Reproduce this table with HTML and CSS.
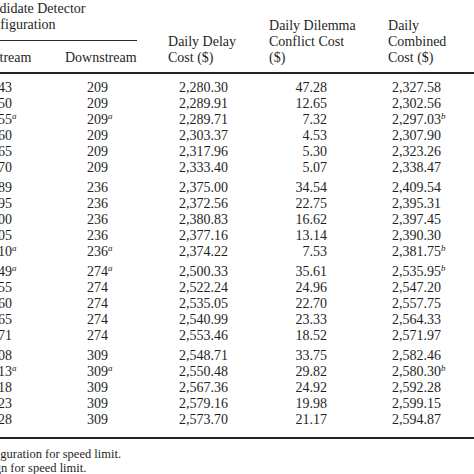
FILE: index.html
```html
<!DOCTYPE html>
<html>
<head>
<meta charset="utf-8">
<title>Detector configuration costs</title>
<link rel="stylesheet" href="styles.css">
</head>
<body>
<div class="page">
<table class="results">
<colgroup>
<col class="c-up"><col class="c-down"><col class="c-delay"><col class="c-dil"><col class="c-comb">
</colgroup>
<thead>
<tr>
<th colspan="2" class="group-head">Candidate Detector<br>Configuration</th>
<th rowspan="2" class="h-delay">Daily Delay<br>Cost ($)</th>
<th rowspan="2" class="h-dil">Daily Dilemma<br>Conflict Cost<br>($)</th>
<th rowspan="2" class="h-comb">Daily<br>Combined<br>Cost ($)</th>
</tr>
<tr>
<th class="h-up">Upstream</th>
<th class="h-down">Downstream</th>
</tr>
</thead>
<tbody>
<tr class="first"><td class="up">243</td><td class="down">209</td><td class="delay">2,280.30</td><td class="dil">47.28</td><td class="comb">2,327.58</td></tr>
<tr><td class="up">250</td><td class="down">209</td><td class="delay">2,289.91</td><td class="dil">12.65</td><td class="comb">2,302.56</td></tr>
<tr><td class="up">255<sup class="fn">a</sup></td><td class="down">209<sup class="fn">a</sup></td><td class="delay">2,289.71</td><td class="dil">7.32</td><td class="comb">2,297.03<sup class="fn fn-z">b</sup></td></tr>
<tr><td class="up">260</td><td class="down">209</td><td class="delay">2,303.37</td><td class="dil">4.53</td><td class="comb">2,307.90</td></tr>
<tr><td class="up">265</td><td class="down">209</td><td class="delay">2,317.96</td><td class="dil">5.30</td><td class="comb">2,323.26</td></tr>
<tr><td class="up">270</td><td class="down">209</td><td class="delay">2,333.40</td><td class="dil">5.07</td><td class="comb">2,338.47</td></tr>

<tr class="gs"><td class="up">289</td><td class="down">236</td><td class="delay">2,375.00</td><td class="dil">34.54</td><td class="comb">2,409.54</td></tr>
<tr><td class="up">295</td><td class="down">236</td><td class="delay">2,372.56</td><td class="dil">22.75</td><td class="comb">2,395.31</td></tr>
<tr><td class="up">300</td><td class="down">236</td><td class="delay">2,380.83</td><td class="dil">16.62</td><td class="comb">2,397.45</td></tr>
<tr><td class="up">305</td><td class="down">236</td><td class="delay">2,377.16</td><td class="dil">13.14</td><td class="comb">2,390.30</td></tr>
<tr><td class="up">310<sup class="fn">a</sup></td><td class="down">236<sup class="fn">a</sup></td><td class="delay">2,374.22</td><td class="dil">7.53</td><td class="comb">2,381.75<sup class="fn fn-z">b</sup></td></tr>

<tr class="gs"><td class="up">349<sup class="fn">a</sup></td><td class="down">274<sup class="fn">a</sup></td><td class="delay">2,500.33</td><td class="dil">35.61</td><td class="comb">2,535.95<sup class="fn fn-z">b</sup></td></tr>
<tr><td class="up">355</td><td class="down">274</td><td class="delay">2,522.24</td><td class="dil">24.96</td><td class="comb">2,547.20</td></tr>
<tr><td class="up">360</td><td class="down">274</td><td class="delay">2,535.05</td><td class="dil">22.70</td><td class="comb">2,557.75</td></tr>
<tr><td class="up">365</td><td class="down">274</td><td class="delay">2,540.99</td><td class="dil">23.33</td><td class="comb">2,564.33</td></tr>
<tr><td class="up">371</td><td class="down">274</td><td class="delay">2,553.46</td><td class="dil">18.52</td><td class="comb">2,571.97</td></tr>

<tr class="gs"><td class="up">408</td><td class="down">309</td><td class="delay">2,548.71</td><td class="dil">33.75</td><td class="comb">2,582.46</td></tr>
<tr><td class="up">413<sup class="fn">a</sup></td><td class="down">309<sup class="fn">a</sup></td><td class="delay">2,550.48</td><td class="dil">29.82</td><td class="comb">2,580.30<sup class="fn fn-z">b</sup></td></tr>
<tr><td class="up">418</td><td class="down">309</td><td class="delay">2,567.36</td><td class="dil">24.92</td><td class="comb">2,592.28</td></tr>
<tr><td class="up">423</td><td class="down">309</td><td class="delay">2,579.16</td><td class="dil">19.98</td><td class="comb">2,599.15</td></tr>
<tr class="last"><td class="up">428</td><td class="down">309</td><td class="delay">2,573.70</td><td class="dil">21.17</td><td class="comb">2,594.87</td></tr>
</tbody>
</table>
<div class="notes">
<p class="note"><sup class="fn">a</sup>Optimal configuration for speed limit.</p>
<p class="note"><sup class="fn">b</sup>Optimal design for speed limit.</p>
</div>
</div>
</body>
</html>
```

FILE: styles.css
```css
html, body {
  margin: 0;
  padding: 0;
  background: #ffffff;
}

body {
  width: 474px;
  height: 474px;
  overflow: hidden;
  color: #1f1f1f;
  font-family: "Liberation Serif", "Times New Roman", serif;
}

.page {
  margin-left: -23px;
  width: 560px;
}

.results {
  border-collapse: collapse;
  table-layout: fixed;
  width: 523px;
  font-size: 14px;
  line-height: 16px;
}

.c-up { width: 88px; }
.c-down { width: 72px; }
.c-delay { width: 123px; }
.c-dil { width: 120px; }
.c-comb { width: 120px; }

.results th,
.results td {
  padding: 0;
  font-weight: normal;
  text-align: left;
  white-space: nowrap;
}

.results .group-head {
  vertical-align: top;
  padding-top: 1px;
  padding-bottom: 7px;
  border-bottom: 1px solid #2a2a2a;
}

.results .h-up,
.results .h-down {
  padding-top: 9px;
  padding-bottom: 6px;
  border-bottom: 2px solid #222;
}

.results .h-delay,
.results .h-dil,
.results .h-comb {
  vertical-align: bottom;
  padding-bottom: 6px;
  border-bottom: 2px solid #222;
}

.results .h-delay { padding-left: 31px; }
.results .h-dil { padding-left: 9px; }
.results .h-comb { padding-left: 8px; }

.results .up { padding-left: 14px; }
.results .down { padding-left: 22px; }
.results .delay { text-align: right; padding-right: 32px; }
.results .dil { text-align: right; padding-right: 53px; }
.results .comb { text-align: right; padding-right: 59px; }

.results tr.first td { padding-top: 6px; }
.results tr.gs td { padding-top: 4px; }
.results tr.last td {
  padding-bottom: 9px;
  border-bottom: 2px solid #222;
}

.fn {
  font-style: italic;
  font-size: 9px;
  line-height: 0;
  vertical-align: 5px;
}

.fn-z {
  display: inline-block;
  width: 0;
}

.notes {
  margin-top: 8px;
  margin-left: -51px;
}

.note {
  margin: 0;
  font-size: 12.5px;
  line-height: 14px;
  white-space: nowrap;
}
```
